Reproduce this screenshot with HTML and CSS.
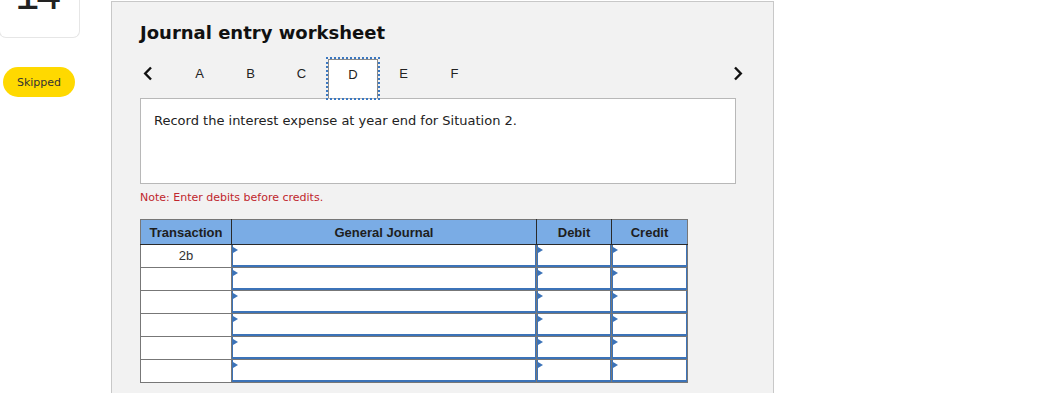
FILE: index.html
```html
<!DOCTYPE html>
<html>
<head>
<meta charset="utf-8">
<link rel="stylesheet" href="styles.css">
</head>
<body>
<div class="page">
  <aside class="side">
    <div class="qcard"><span class="qnum">14</span></div>
    <div class="pill">Skipped</div>
  </aside>
  <main class="panel">
    <h1 class="title">Journal entry worksheet</h1>
    <nav class="tabs">
      <span class="arrow prev"><svg width="10" height="15" viewBox="0 0 10 15"><path d="M8 1.5 L2.2 7.5 L8 13.5" fill="none" stroke="#111" stroke-width="2.4"/></svg></span>
      <span class="tab">A</span>
      <span class="tab">B</span>
      <span class="tab">C</span>
      <span class="tab active">D</span>
      <span class="tab">E</span>
      <span class="tab">F</span>
      <span class="spacer"></span>
      <span class="arrow next"><svg width="10" height="15" viewBox="0 0 10 15"><path d="M2 1.5 L7.8 7.5 L2 13.5" fill="none" stroke="#111" stroke-width="2.4"/></svg></span>
    </nav>
    <div class="prompt">Record the interest expense at year end for Situation 2.</div>
    <p class="note">Note: Enter debits before credits.</p>
    <table class="journal">
      <colgroup>
        <col class="c-tr"><col class="c-gj"><col class="c-dr"><col class="c-cr">
      </colgroup>
      <thead>
        <tr><th>Transaction</th><th>General Journal</th><th>Debit</th><th>Credit</th></tr>
      </thead>
      <tbody>
        <tr><td class="tr">2b</td><td><div class="inp"></div></td><td><div class="inp"></div></td><td><div class="inp"></div></td></tr>
        <tr><td class="tr"></td><td><div class="inp"></div></td><td><div class="inp"></div></td><td><div class="inp"></div></td></tr>
        <tr><td class="tr"></td><td><div class="inp"></div></td><td><div class="inp"></div></td><td><div class="inp"></div></td></tr>
        <tr><td class="tr"></td><td><div class="inp"></div></td><td><div class="inp"></div></td><td><div class="inp"></div></td></tr>
        <tr><td class="tr"></td><td><div class="inp"></div></td><td><div class="inp"></div></td><td><div class="inp"></div></td></tr>
        <tr><td class="tr"></td><td><div class="inp"></div></td><td><div class="inp"></div></td><td><div class="inp"></div></td></tr>
      </tbody>
    </table>
  </main>
</div>
</body>
</html>
```
FILE: styles.css
```css
html, body {
  margin: 0;
  padding: 0;
  background: #ffffff;
  overflow: hidden;
}
.page {
  display: flex;
  align-items: flex-start;
  height: 393px;
}
.side {
  width: 111px;
  flex: none;
  display: flex;
  flex-direction: column;
}
.qcard {
  width: 81px;
  height: 38px;
  margin-left: -1px;
  box-sizing: border-box;
  border: 1px solid #e6e6e6;
  border-top: none;
  border-radius: 0 0 7px 7px;
  overflow: hidden;
  padding-left: 15px;
}
.qnum {
  display: block;
  font-family: "Liberation Sans", Arial, sans-serif;
  font-size: 44px;
  line-height: 44px;
  margin-top: -28px;
  letter-spacing: -3px;
  color: #222;
}
.pill {
  margin: 29px 0 0 3px;
  width: 72px;
  height: 30px;
  border-radius: 15px;
  background: #ffd900;
  display: flex;
  align-items: center;
  justify-content: center;
  font-family: "DejaVu Sans", sans-serif;
  font-size: 11px;
  color: #333;
}
.panel {
  width: 663px;
  height: 420px;
  margin-top: 1px;
  box-sizing: border-box;
  background: #f2f2f2;
  border: 1px solid #c8c8c8;
  padding: 20px 0 0 28px;
}
.title {
  margin: 0;
  font-family: "DejaVu Sans", sans-serif;
  font-weight: bold;
  font-size: 18px;
  line-height: 22px;
  color: #111;
}
.tabs {
  margin-top: 15px;
  display: flex;
  align-items: stretch;
  height: 39px;
  width: 604px;
  font-family: "Liberation Sans", Arial, sans-serif;
  font-size: 13px;
  color: #222;
  position: relative;
  z-index: 1;
}
.arrow {
  display: flex;
  align-items: center;
  padding-bottom: 10px;
  box-sizing: border-box;
}
.prev { width: 34px; padding-left: 3px; }
.next { width: 11px; }
.spacer { flex: 1; }
.tab {
  width: 51px;
  display: flex;
  align-items: center;
  justify-content: center;
  box-sizing: border-box;
  padding-bottom: 11px;
}
.tab.active {
  background: #ffffff;
  border: 1px solid #8a8a8a;
  border-bottom: none;
  outline: 2px dotted #3a78c2;
  margin-left: 1px;
  width: 50px;
  padding-bottom: 10px;
}
.prompt {
  width: 596px;
  height: 86px;
  box-sizing: border-box;
  background: #ffffff;
  border: 1px solid #b8b8b8;
  padding: 14px 0 0 13px;
  font-family: "DejaVu Sans", sans-serif;
  font-size: 13px;
  line-height: 16px;
  color: #222;
}
.note {
  margin: 7px 0 0 0;
  font-family: "DejaVu Sans", sans-serif;
  font-size: 11px;
  line-height: 13px;
  color: #c0262d;
}
.journal {
  margin-top: 15px;
  border-collapse: collapse;
  table-layout: fixed;
  width: 547px;
  font-family: "Liberation Sans", Arial, sans-serif;
  font-size: 13px;
}
.c-tr { width: 91px; }
.c-gj { width: 305px; }
.c-dr { width: 75px; }
.c-cr { width: 76px; }
.journal th {
  height: 24px;
  padding: 0;
  background: #7aace5;
  color: #1e1e1e;
  font-weight: bold;
  border: 1px solid #2a2a2a;
  border-top-color: #777;
  text-align: center;
}
.journal th:first-child { border-left-color: #777; }
.journal th:last-child { border-right-color: #777; }
.journal td {
  height: 22px;
  padding: 0;
  border: 1px solid #777;
  background: #ffffff;
  vertical-align: top;
}
.journal td.tr {
  text-align: center;
  vertical-align: middle;
  color: #333;
  padding-bottom: 2px;
  box-sizing: border-box;
}
.inp {
  position: relative;
  height: 22px;
  box-sizing: border-box;
  border: 1px solid #3c73b8;
  border-top: none;
  border-bottom-width: 2px;
}
.inp::before {
  content: "";
  position: absolute;
  left: 0;
  top: 2px;
  border-left: 5px solid #3c73b8;
  border-top: 3px solid transparent;
  border-bottom: 3px solid transparent;
}
```
